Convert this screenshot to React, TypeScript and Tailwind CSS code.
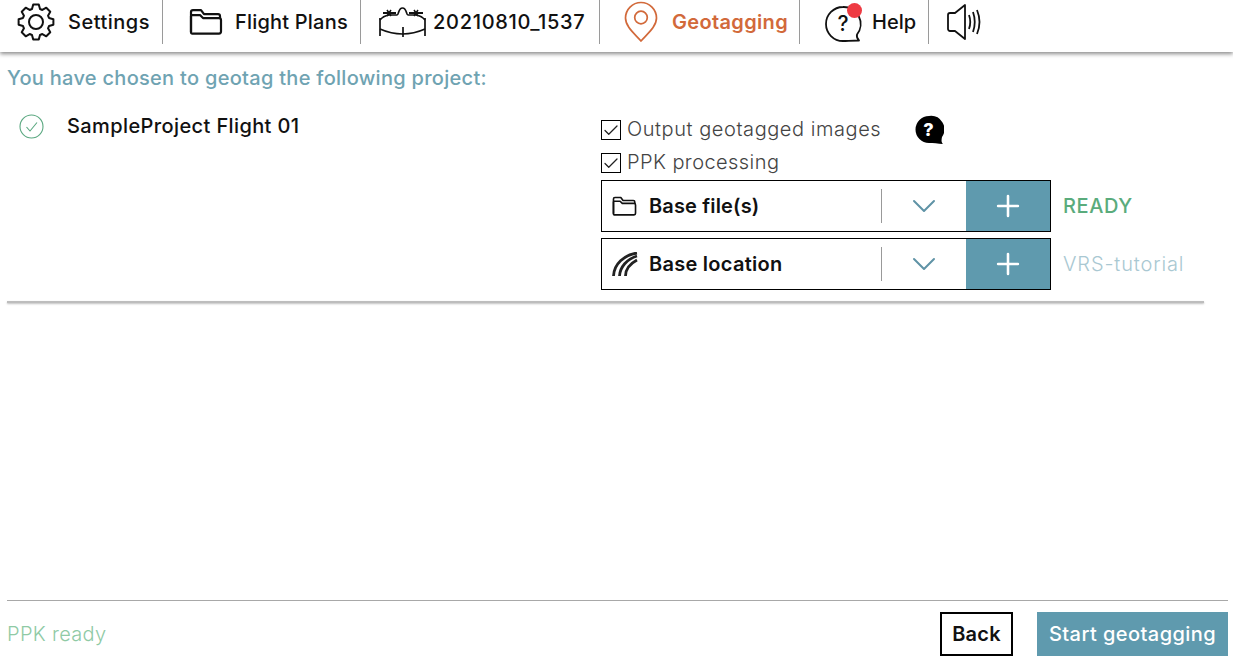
import { Check, ChevronDown, Plus } from 'lucide-react';

function gearPath() {
  const cx = 19;
  const cy = 19;
  const pts: string[] = [];
  for (let i = 0; i < 8; i++) {
    const a = (i * Math.PI) / 4 - Math.PI / 2;
    const offsets: [number, number][] = [[-0.3, 13.6], [-0.16, 17.6], [0.16, 17.6], [0.3, 13.6]];
    for (const [d, r] of offsets) {
      pts.push(`${(cx + r * Math.cos(a + d)).toFixed(2)} ${(cy + r * Math.sin(a + d)).toFixed(2)}`);
    }
  }
  return `M${pts.join('L')}z`;
}

function GearIcon() {
  return (
    <svg width="38" height="38" viewBox="0 0 38 38" fill="none" stroke="#111" strokeWidth="2" strokeLinejoin="round">
      <path d={gearPath()} />
      <circle cx="19" cy="19" r="7" />
    </svg>
  );
}

function FolderIcon({ size = 34 }: { size?: number }) {
  return (
    <svg width={size} height={size * 0.8} viewBox="0 0 34 27" fill="none" stroke="#111" strokeWidth="2.200" strokeLinejoin="round">
      <path d="M2 24V4a2 2 0 0 1 2-2h8l3 4h14a2 2 0 0 1 2 2v2" />
      <path d="M2 24.500a1 1 0 0 0 1 1h27a2 2 0 0 0 2-2V12a2 2 0 0 0-2-2H14l-3-3H3a1 1 0 0 0-1 1z" />
    </svg>
  );
}

function DroneIcon() {
  return (
    <svg width="48" height="32" viewBox="0 0 48 32" fill="none" stroke="#111" strokeWidth="1.700">
      <path d="M2 12v18M47 12v18" />
      <path d="M2 23Q24.500 33 47 23" />
      <path d="M25 21v10" />
      <path d="M2 14Q5 10 11 9H19c2 0 1-7 5.500-7s3.500 7 5.500 7H38q6 1 9 5" />
      <path d="M5 7H18M31 7H45" strokeWidth="2" />
      <path d="M9 4l4 6M13 4l-4 6M36 4l4 6M40 4l-4 6" strokeWidth="1.500" />
    </svg>
  );
}

function PinIcon() {
  return (
    <svg width="34" height="42" viewBox="0 0 34 42" fill="none" stroke="#d2693a" strokeWidth="1.700">
      <path d="M17 40C11 33 1.500 26 1.500 17a15.500 15.500 0 0 1 31 0C32.500 26 23 33 17 40z" strokeLinejoin="round" />
      <circle cx="17" cy="16.500" r="6.300" />
    </svg>
  );
}

function HelpBubble() {
  return (
    <svg width="40" height="42" viewBox="0 0 40 42" fill="none">
      <path d="M20 6a17 17 0 1 0 0 34c4 0 9-.5 16-.5-2-2-2.500-4-2-6A17 17 0 0 0 20 6z" stroke="#111" strokeWidth="1.800" strokeLinejoin="round" />
      <text x="20" y="30" textAnchor="middle" fontSize="21" fontWeight="500" fill="#111" fontFamily="Inter, sans-serif">?</text>
      <circle cx="31.500" cy="9.500" r="7.500" fill="#ee3b43" />
    </svg>
  );
}

function SpeakerIcon() {
  return (
    <svg width="34" height="38" viewBox="0 0 34 38" fill="none" stroke="#111" strokeWidth="1.800" strokeLinejoin="round">
      <path d="M3 10H8L18 2V36L8 28H3a2 2 0 0 1-2-2V12a2 2 0 0 1 2-2z" />
      <path d="M22 12q2.500 7 0 14M26 9q3.500 10 0 20M30 7q5 12 0 24" />
    </svg>
  );
}

function SignalIcon() {
  return (
    <svg width="26" height="24" viewBox="0 0 26 24" fill="none" stroke="#222" strokeWidth="2.800">
      <path d="M1.500 24C2 12 12 3 25 1" />
      <path d="M7.500 24C8 15 15 7 25 4" />
      <path d="M13.500 24c0-6 4-12 11.500-16" />
    </svg>
  );
}

function NavItem({ className, children }: { className: string; children: React.ReactNode }) {
  return <div className={`h-[44px] flex items-center border-r border-[#9a9a9a] ${className}`}>{children}</div>;
}

function CheckBox() {
  return (
    <span className="w-[20px] h-[20px] border border-black flex items-center justify-center">
      <Check size={19} strokeWidth={1.700} className="text-[#222]" />
    </span>
  );
}

function PickerRow({ icon, label, labelClass, status, statusClass }: { icon: React.ReactNode; label: string; labelClass: string; status: string; statusClass: string }) {
  return (
    <div className="flex items-center">
      <div className="w-[450px] h-[52px] border border-black flex items-stretch">
        <div className="w-[37px] ml-[10px] flex items-center">{icon}</div>
        <div className={`w-[232px] flex items-center font-semibold text-[20px] text-[#111] ${labelClass}`}>
          <span>{label}</span>
        </div>
        <div className="my-[8px] border-l border-[#999]" />
        <div className="w-[84px] flex items-center justify-center">
          <ChevronDown size={40} strokeWidth={1.200} className="text-[#5f93a6]" />
        </div>
        <div className="w-[84px] bg-[#5f9aae] flex items-center justify-center">
          <Plus size={34} strokeWidth={1.800} className="text-white" />
        </div>
      </div>
      <span className={`ml-[12px] text-[20px] ${statusClass}`}>{status}</span>
    </div>
  );
}

export default function App() {
  return (
    <div className="h-[662px] w-[1233px] overflow-hidden bg-white flex flex-col font-['Inter',sans-serif] text-[#111]">
      <header className="h-[52px] shrink-0 flex bg-white shadow-[0_2px_4px_rgba(0,0,0,0.45)] text-[20px] font-medium">
        <NavItem className="w-[163px] pl-[17px] gap-[13px]">
          <GearIcon />
          <span className="tracking-[0.5px]">Settings</span>
        </NavItem>
        <NavItem className="w-[198px] pl-[26px] gap-[12px]">
          <FolderIcon />
          <span className="tracking-[0.2px]">Flight Plans</span>
        </NavItem>
        <NavItem className="w-[239px] pl-[17px] gap-[7px]">
          <DroneIcon />
          <span className="tracking-[0.7px]">20210810_1537</span>
        </NavItem>
        <NavItem className="w-[200px] pl-[24px] gap-[14px] text-[#d2693a] font-semibold">
          <PinIcon />
          <span className="tracking-[0.34px]">Geotagging</span>
        </NavItem>
        <NavItem className="w-[129px] pl-[23px] gap-[9px]">
          <HelpBubble />
          <span>Help</span>
        </NavItem>
        <div className="h-[44px] pl-[18px] flex items-center">
          <SpeakerIcon />
        </div>
      </header>

      <main className="flex-1 flex flex-col">
        <div className="mx-[7px] w-[1197px] h-[249px] flex flex-col">
          <p className="mt-[14px] h-[24px] leading-[24px] text-[20px] font-medium tracking-[0.29px] text-[#6fa3b2]">
            You have chosen to geotag the following project:
          </p>
          <div className="flex flex-1">
            <div className="w-[594px] pl-[12px] pt-[23px] flex items-start gap-[23px]">
              <svg width="25" height="25" viewBox="0 0 25 25" fill="none" stroke="#5aa880" strokeWidth="1.100" className="mt-[1px]">
                <circle cx="12.500" cy="12.500" r="11.500" />
                <path d="M7.500 13l3.500 4 7-8.500" />
              </svg>
              <span className="text-[20px] font-medium tracking-[0.39px] leading-[26px]">SampleProject Flight 01</span>
            </div>
            <div className="flex flex-col">
              <div className="mt-[24px] h-[32px] flex items-center gap-[6px] text-[20px] font-light text-[#444]">
                <CheckBox />
                <span className="pb-[2px] tracking-[0.56px]">Output geotagged images</span>
                <svg width="30" height="30" viewBox="0 0 30 30" className="ml-[27px]">
                  <path d="M15 1a13.500 13.500 0 1 0 0 27c4 0 9 .5 14 1-2-2-1.500-4-1-7A13.500 13.500 0 0 0 15 1z" fill="#000" />
                  <text x="14.500" y="21" textAnchor="middle" fontSize="18" fontWeight="800" fill="#fff" fontFamily="Inter, sans-serif">?</text>
                </svg>
              </div>
              <div className="h-[34px] flex items-center gap-[6px] text-[20px] font-light text-[#444]">
                <CheckBox />
                <span className="pb-[2px] tracking-[0.43px]">PPK processing</span>
              </div>
              <div className="flex flex-col gap-[6px]">
                <PickerRow icon={<FolderIcon size={25} />} label="Base file(s)" labelClass="tracking-[0.15px]" status="READY" statusClass="text-[#5aab7c] font-medium tracking-[0.6px]" />
                <PickerRow icon={<SignalIcon />} label="Base location" labelClass="tracking-[0.27px]" status="VRS-tutorial" statusClass="font-light text-[#a9c8d2] tracking-[0.87px]" />
              </div>
            </div>
          </div>
        </div>
        <div className="mx-[7px] w-[1197px] h-[2px] bg-[#bdbdbd] shadow-[0_1px_2px_rgba(0,0,0,0.25)]" />

        <div className="mt-auto mx-[7px] w-[1221px] h-[62px] border-t border-[#a8a8a8] flex items-center justify-between">
          <span className="pt-[4px] text-[20px] font-light tracking-[0.33px] text-[#8fcaa5]">PPK ready</span>
          <div className="flex items-center gap-[24px] mt-[5px]">
            <button className="w-[73px] h-[44px] border-2 border-black text-[20px] font-semibold tracking-[0.25px] bg-white">Back</button>
            <button className="w-[191px] h-[44px] bg-[#5f9aae] text-white text-[20px] font-medium tracking-[0.44px]">Start geotagging</button>
          </div>
        </div>
      </main>
    </div>
  );
}
